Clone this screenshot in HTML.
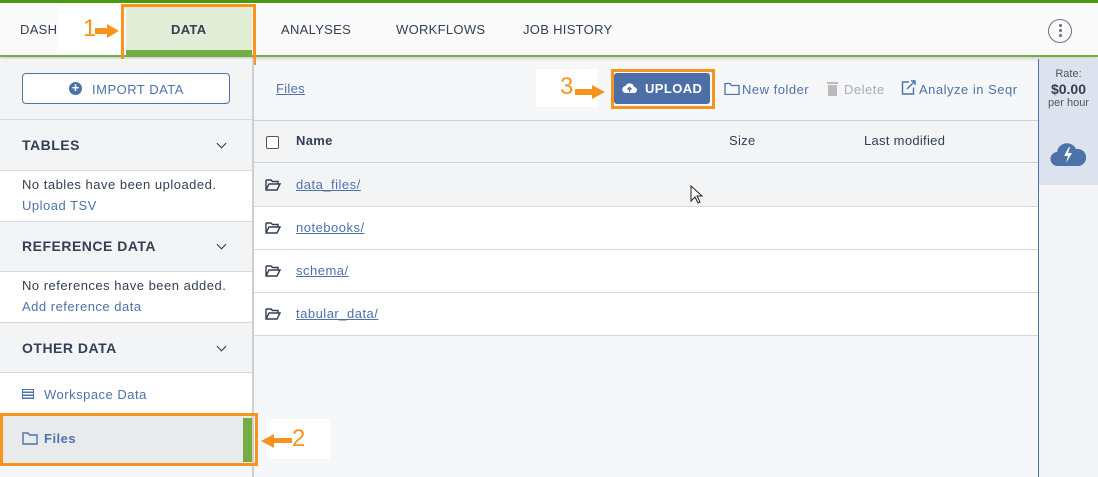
<!DOCTYPE html>
<html><head><meta charset="utf-8"><style>
*{box-sizing:border-box;margin:0;padding:0}
body{width:1098px;height:477px;overflow:hidden;font-family:"Liberation Sans",sans-serif;background:#f6f7f9;position:relative;color:#333f52;letter-spacing:.3px}
.a{position:absolute}
.tab{position:absolute;top:22px;font-size:13px;color:#333f52;letter-spacing:.3px}
.lnk{color:#4d72aa;text-decoration:underline}
.hd{position:absolute;left:0;width:252px;background:#f3f4f6;border-bottom:1px solid #d8d8d8;font-weight:bold;font-size:14px;letter-spacing:.5px}
.hd span{position:absolute;left:22px}
.chev{position:absolute;left:218px;width:7px;height:7px;border-right:1.5px solid #333;border-bottom:1.5px solid #333;transform:rotate(45deg)}
.bd{position:absolute;left:0;width:252px;background:#fff;border-bottom:1px solid #d8d8d8;font-size:13px;letter-spacing:.5px}
.row{position:absolute;left:254px;width:784px;height:43px;border-bottom:1px solid #d8d8d8;background:#fff}
.row .n{position:absolute;left:42px;top:13px;font-size:13px;color:#4d72aa;text-decoration:underline;letter-spacing:.5px}
.row svg{position:absolute;left:11px;top:15px}
.orange{position:absolute;border:3px solid #f7941d}
.ann{position:absolute;background:#fff;color:#f7941d;font-size:24px}
</style></head><body>
<div class="a" style="left:0;top:0;width:1098px;height:3px;background:#4a9a10"></div>
<div class="a" style="left:0;top:3px;width:1098px;height:54px;background:#fafafa;border-bottom:2px solid #74ae43;box-shadow:0 2px 3px rgba(0,0,0,.15)"></div>
<div class="tab" style="left:20px">DASH</div>
<div class="a" style="left:126px;top:6px;width:126px;height:50px;background:#e2eed8"></div>
<div class="a" style="left:126px;top:50px;width:126px;height:6px;background:#74ae43"></div>
<div class="tab" style="left:171px;font-weight:bold">DATA</div>
<div class="tab" style="left:281px">ANALYSES</div>
<div class="tab" style="left:396px">WORKFLOWS</div>
<div class="tab" style="left:523px">JOB HISTORY</div>
<div class="a" style="left:1048px;top:19px;width:24px;height:24px;border:1.5px solid #6b7384;border-radius:50%"></div>
<div class="a" style="left:1059px;top:24px;width:2.5px;height:2.5px;background:#6b7384;border-radius:50%;box-shadow:0 5px 0 #6b7384,0 10px 0 #6b7384"></div>
<div class="ann" style="left:57px;top:5px;width:65px;height:49px;padding:10px 0 0 26px">1</div>
<div class="a" style="left:95px;top:28px;width:14px;height:6px;background:#f7941d"></div>
<div class="a" style="left:107px;top:24px;border-left:12px solid #f7941d;border-top:7px solid transparent;border-bottom:7px solid transparent"></div>
<div class="orange" style="left:121px;top:4px;width:135px;height:61px"></div>

<div class="a" style="left:0;top:59px;width:252px;height:61px;background:#f3f4f6;border-bottom:1px solid #d8d8d8"></div>
<div class="a" style="left:252px;top:59px;width:2px;height:418px;background:#cfcfcf"></div>
<div class="a" style="left:22px;top:73px;width:208px;height:31px;background:#fff;border:1px solid #4d72aa;border-radius:4px;font-size:13px;color:#4d72aa;padding:8px 0 0 69px;letter-spacing:.5px">IMPORT DATA</div>
<div class="a" style="left:69px;top:82px;width:13px;height:13px;border-radius:50%;background:#4d72aa;color:#fff;font-size:13px;line-height:12px;text-align:center;font-weight:bold;letter-spacing:0">+</div>
<div class="hd" style="top:121px;height:50px"><span style="top:16px">TABLES</span><div class="chev" style="top:19px"></div></div>
<div class="bd" style="top:171px;height:51px"><div class="a" style="left:22px;top:6px;color:#333f52">No tables have been uploaded.</div><div class="a" style="left:22px;top:27px;color:#4d72aa">Upload TSV</div></div>
<div class="hd" style="top:222px;height:50px"><span style="top:16px">REFERENCE DATA</span><div class="chev" style="top:19px"></div></div>
<div class="bd" style="top:272px;height:51px"><div class="a" style="left:22px;top:6px">No references have been added.</div><div class="a" style="left:22px;top:27px;color:#4d72aa">Add reference data</div></div>
<div class="hd" style="top:323px;height:50px"><span style="top:17px">OTHER DATA</span><div class="chev" style="top:20px"></div></div>
<div class="bd" style="top:373px;height:42px"><div class="a" style="left:44px;top:14px;color:#4d72aa">Workspace Data</div>
<div class="a" style="left:22px;top:16px;width:12px;height:10px;border:1.5px solid #4d72aa;background:repeating-linear-gradient(#fff 0 1.5px,#4d72aa 1.5px 3px)"></div></div>
<div class="a" style="left:0;top:415px;width:252px;height:48px;background:#e9eaec"></div>
<svg class="a" style="left:22px;top:431px" width="16" height="14" viewBox="0 0 16 14"><path d="M1 2h5l1.5 2H15v9H1z" fill="none" stroke="#4d72aa" stroke-width="1.4"/></svg>
<div class="a" style="left:44px;top:431px;font-size:13px;font-weight:bold;color:#4d72aa;letter-spacing:.5px">Files</div>
<div class="a" style="left:243px;top:418px;width:9px;height:44px;background:#74ae43"></div>
<div class="orange" style="left:0;top:413px;width:258px;height:53px"></div>
<div class="ann" style="left:267px;top:419px;width:63px;height:40px;padding:6px 0 0 25px">2</div>
<div class="a" style="left:274px;top:438px;width:18px;height:5px;background:#f7941d"></div>
<div class="a" style="left:261px;top:434px;border-right:13px solid #f7941d;border-top:7px solid transparent;border-bottom:7px solid transparent"></div>

<div class="a lnk" style="left:276px;top:81px;font-size:13px">Files</div>
<div class="a" style="left:254px;top:120px;width:784px;height:1px;background:#d0d0d0"></div>
<div class="ann" style="left:536px;top:69px;width:62px;height:38px;padding:4px 0 0 24px">3</div>
<div class="a" style="left:575px;top:89px;width:18px;height:6px;background:#f7941d"></div>
<div class="a" style="left:592px;top:85px;border-left:13px solid #f7941d;border-top:7px solid transparent;border-bottom:7px solid transparent"></div>
<div class="a" style="left:614px;top:73px;width:96px;height:31px;background:#4d6fa7;border-radius:3px;color:#fff;font-size:13px;font-weight:bold;padding:8px 0 0 31px;letter-spacing:.4px">UPLOAD</div>
<svg class="a" style="left:622px;top:82px" width="15" height="12" viewBox="0 0 15 12"><path d="M4 11a3.5 3.5 0 0 1-.5-7 4.5 4.5 0 0 1 8.5 1 3 3 0 0 1 0 6z" fill="#fff"/><path d="M7.5 10V5.5M5.5 7.5l2-2 2 2" stroke="#4d6fa7" stroke-width="1.4" fill="none"/></svg>
<div class="orange" style="left:611px;top:69px;width:104px;height:40px"></div>
<svg class="a" style="left:724px;top:82px" width="16" height="13" viewBox="0 0 16 13"><path d="M1 1.5h5l1.5 2H15v9H1z" fill="none" stroke="#4d72aa" stroke-width="1.3"/></svg>
<div class="a" style="left:742px;top:82px;font-size:13px;color:#4d72aa;letter-spacing:.5px">New folder</div>
<svg class="a" style="left:826px;top:81px" width="13" height="15" viewBox="0 0 13 15"><rect x="1" y="1" width="11" height="2" fill="#bbb"/><rect x="2" y="4" width="9" height="11" fill="#bbb"/></svg>
<div class="a" style="left:844px;top:82px;font-size:13px;color:#aab;letter-spacing:.5px">Delete</div>
<svg class="a" style="left:901px;top:80px" width="15" height="15" viewBox="0 0 15 15"><path d="M8 2H1.5v12h11V7.5" fill="none" stroke="#4d72aa" stroke-width="1.4"/><path d="M6 9l8-8M10 1h4v4" fill="none" stroke="#4d72aa" stroke-width="1.4"/></svg>
<div class="a" style="left:919px;top:82px;font-size:13px;color:#4d72aa;letter-spacing:.5px">Analyze in Seqr</div>

<div class="a" style="left:254px;top:121px;width:784px;height:42px;background:#f3f4f6;border-bottom:1px solid #d0d0d0"></div>
<div class="a" style="left:266px;top:136px;width:13px;height:13px;border:1.5px solid #555;border-radius:2px;background:#fff"></div>
<div class="a" style="left:296px;top:133px;font-size:13px;font-weight:bold">Name</div>
<div class="a" style="left:729px;top:133px;font-size:13px">Size</div>
<div class="a" style="left:864px;top:133px;font-size:13px">Last modified</div>
<div class="row" style="top:164px;background:#f3f4f6"><svg width="16" height="12" viewBox="0 0 16 12"><path d="M1 1h5l1.5 1.5H13V5M1 1v10h11l3-6H4L1 11" fill="none" stroke="#333f52" stroke-width="1.4"/></svg><span class="n">data_files/</span></div>
<div class="row" style="top:207px"><svg width="16" height="12" viewBox="0 0 16 12"><path d="M1 1h5l1.5 1.5H13V5M1 1v10h11l3-6H4L1 11" fill="none" stroke="#333f52" stroke-width="1.4"/></svg><span class="n">notebooks/</span></div>
<div class="row" style="top:250px"><svg width="16" height="12" viewBox="0 0 16 12"><path d="M1 1h5l1.5 1.5H13V5M1 1v10h11l3-6H4L1 11" fill="none" stroke="#333f52" stroke-width="1.4"/></svg><span class="n">schema/</span></div>
<div class="row" style="top:293px"><svg width="16" height="12" viewBox="0 0 16 12"><path d="M1 1h5l1.5 1.5H13V5M1 1v10h11l3-6H4L1 11" fill="none" stroke="#333f52" stroke-width="1.4"/></svg><span class="n">tabular_data/</span></div>
<svg class="a" style="left:690px;top:185px" width="13" height="19" viewBox="0 0 13 19"><path d="M1 1v15l4-4 3 6 2-1-3-6h5z" fill="#fff" stroke="#222" stroke-width="1"/></svg>

<div class="a" style="left:1038px;top:59px;width:60px;height:418px;background:#f3f4f6;border-left:1px solid #4d72aa"></div>
<div class="a" style="left:1039px;top:59px;width:59px;height:126px;background:#dde3ee"></div>
<div class="a" style="left:1039px;top:68px;width:59px;text-align:center;font-size:11px;color:#555;letter-spacing:0">Rate:</div>
<div class="a" style="left:1039px;top:81px;width:59px;text-align:center;font-size:14px;font-weight:bold;letter-spacing:0">$0.00</div>
<div class="a" style="left:1039px;top:97px;width:59px;text-align:center;font-size:11px;color:#555;letter-spacing:0">per hour</div>
<svg class="a" style="left:1050px;top:139px" width="36" height="28" viewBox="0 0 36 28"><path d="M8 27a7 7 0 0 1-1-14 10 10 0 0 1 19-3 8 8 0 0 1 3 17z" fill="#4d72aa"/><path d="M19 8l-5 9h4l-2 7 6-10h-4l2-6z" fill="#fff"/></svg>
</body></html>
